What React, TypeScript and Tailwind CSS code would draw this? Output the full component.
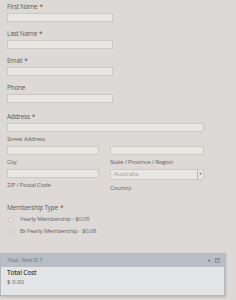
import type { ReactNode } from "react";

function Label({ children, required }: { children: ReactNode; required?: boolean }) {
  return (
    <div className="h-[8px] text-[6.5px] leading-[8px] tracking-[-0.25px] text-[#5c5c5c]">
      {children}
      {required && <span className="ml-[2px] text-[#7a4a4a]">*</span>}
    </div>
  );
}

function SubLabel({ children }: { children: ReactNode }) {
  return (
    <div className="h-[8px] text-[6px] leading-[8px] tracking-[-0.2px] text-[#666]">
      {children}
    </div>
  );
}

function Box({ className = "" }: { className?: string }) {
  return <div className={`h-[9px] border border-[#cdc9c5] bg-[#e8e6e3] ${className}`} />;
}

function Field({ label, required, width = "w-[106px]" }: { label: string; required?: boolean; width?: string }) {
  return (
    <div className="mb-[8px]">
      <Label required={required}>{label}</Label>
      <Box className={`mt-[2px] ${width}`} />
    </div>
  );
}

function Radio({ label }: { label: string }) {
  return (
    <div className="flex h-[12px] items-center gap-[6px] pl-[1px]">
      <span className="h-[6px] w-[6px] rounded-full border border-[#cbc7c3] bg-[#e4e1de]" />
      <span className="text-[6px] tracking-[-0.2px] text-[#666]">{label}</span>
    </div>
  );
}

export default function App() {
  return (
    <div className="relative h-[300px] w-[236px] overflow-hidden bg-[#dcd9d6] font-['Open_Sans',sans-serif]">
      <div className="pl-[7px] pt-[3px]">
        <Field label="First Name" required />
        <Field label="Last Name" required />
        <Field label="Email" required />
        <Field label="Phone" />

        <div className="mt-[10px]">
          <Label required>Address</Label>
          <Box className="mt-[1.5px] w-[197px]" />
          <div className="mt-[3.5px]">
            <SubLabel>Street Address</SubLabel>
          </div>
          <div className="mt-[2.5px] grid w-[197px] grid-cols-[92px_94px] gap-x-[11px]">
            <div>
              <Box />
              <div className="mt-[3px]"><SubLabel>City</SubLabel></div>
              <Box className="mt-[3px]" />
              <div className="mt-[3px]"><SubLabel>ZIP / Postal Code</SubLabel></div>
            </div>
            <div>
              <Box />
              <div className="mt-[3px]"><SubLabel>State / Province / Region</SubLabel></div>
              <div className="mt-[3px] flex h-[11px] items-stretch border border-[#cdc9c5] bg-[#e8e6e3]">
                <span className="flex-1 pl-[3px] text-[6px] leading-[9px] text-[#a09c98]">Australia</span>
                <span className="flex w-[6px] items-center justify-center border-l border-[#bdb9b5] text-[4px] text-[#777]">▼</span>
              </div>
              <div className="mt-[4px]"><SubLabel>Country</SubLabel></div>
            </div>
          </div>
        </div>

        <div className="mt-[12px]">
          <Label required>Membership Type</Label>
          <div className="mt-[2px]">
            <Radio label="Yearly Membership - $0.05" />
            <Radio label="Bi-Yearly Membership - $0.08" />
          </div>
        </div>
      </div>

      <div className="absolute left-0 top-[253px] w-[225px] border border-[#b3b8be] shadow-[1px_1px_2px_rgba(0,0,0,0.18)]">
        <div className="flex h-[13px] items-center justify-between bg-[#b9bec4] pl-[6px] pr-[4px]">
          <span className="text-[5px] tracking-[-0.1px] text-[#6b7580]">Total : Field ID 7</span>
          <span className="flex items-center gap-[4px] text-[#68717b]">
            <span className="text-[4px]">▼</span>
            <span className="flex h-[5px] w-[5px] items-center justify-center border border-[#8c949c] text-[5px] leading-none">×</span>
          </span>
        </div>
        <div className="h-[28px] bg-[#e3e4e6] pl-[6px] pt-[1px]">
          <div className="text-[6.5px] font-semibold leading-[10px] tracking-[-0.2px] text-[#444]">Total Cost</div>
          <div className="text-[6px] leading-[9px] text-[#555]">$ 0.00</div>
        </div>
      </div>
    </div>
  );
}
